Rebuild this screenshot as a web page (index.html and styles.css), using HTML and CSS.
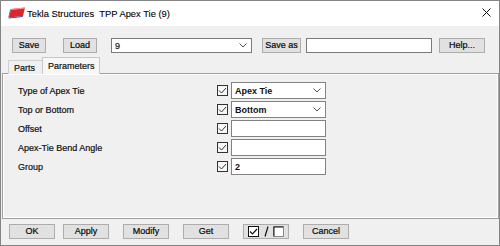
FILE: index.html
```html
<!DOCTYPE html>
<html>
<head>
<meta charset="utf-8">
<link rel="stylesheet" href="styles.css">
</head>
<body>
<div class="window">
  <div class="titlebar">
    <svg class="logo" width="18" height="12" viewBox="0 0 18 12">
      <polygon points="3,2 17,0.5 15,9 1,10.5" fill="#e0242b"/>
      <polygon points="3,2 17,0.5 16.6,1.6 3.2,3.1" fill="#f4a0a0"/>
      <polygon points="1,10.5 15,9 14.6,10 0.6,11.6" fill="#2b4f9e"/>
      <polygon points="1,10.5 3,2 2.2,2.4 0.3,10.6" fill="#2b4f9e"/>
    </svg>
    <span class="title">Tekla Structures&nbsp; TPP Apex Tie (9)</span>
    <svg class="close" width="9" height="9" viewBox="0 0 9 9">
      <path d="M0.5 0.5 L8.5 8.5 M8.5 0.5 L0.5 8.5" stroke="#111" stroke-width="1"/>
    </svg>
  </div>

  <div class="toolbar">
    <div class="btn w34">Save</div>
    <div class="btn w34 load">Load</div>
    <div class="combo top-combo">
      <span>9</span>
      <svg class="chev" width="8" height="5" viewBox="0 0 8 5"><path d="M0.5 0.5 L4 4 L7.5 0.5" fill="none" stroke="#555" stroke-width="1"/></svg>
    </div>
    <div class="btn saveas">Save as</div>
    <div class="field top-field"></div>
    <div class="btn w46 help">Help...</div>
  </div>

  <div class="tabs">
    <div class="tab">Parts</div>
    <div class="tab active">Parameters</div>
  </div>

  <div class="panel">
    <div class="row">
      <span class="label">Type of Apex Tie</span>
      <span class="chk"><svg width="11" height="11" viewBox="0 0 11 11"><rect x="0.5" y="0.5" width="10" height="10" fill="#f7f7f7" stroke="#333"/><path d="M2 5.5 L4.5 8 L9 3" fill="none" stroke="#333" stroke-width="1"/></svg></span>
      <div class="combo val"><span>Apex Tie</span><svg class="chev" width="8" height="5" viewBox="0 0 8 5"><path d="M0.5 0.5 L4 4 L7.5 0.5" fill="none" stroke="#555" stroke-width="1"/></svg></div>
    </div>
    <div class="row">
      <span class="label">Top or Bottom</span>
      <span class="chk"><svg width="11" height="11" viewBox="0 0 11 11"><rect x="0.5" y="0.5" width="10" height="10" fill="#f7f7f7" stroke="#333"/><path d="M2 5.5 L4.5 8 L9 3" fill="none" stroke="#333" stroke-width="1"/></svg></span>
      <div class="combo val"><span>Bottom</span><svg class="chev" width="8" height="5" viewBox="0 0 8 5"><path d="M0.5 0.5 L4 4 L7.5 0.5" fill="none" stroke="#555" stroke-width="1"/></svg></div>
    </div>
    <div class="row">
      <span class="label">Offset</span>
      <span class="chk"><svg width="11" height="11" viewBox="0 0 11 11"><rect x="0.5" y="0.5" width="10" height="10" fill="#f7f7f7" stroke="#333"/><path d="M2 5.5 L4.5 8 L9 3" fill="none" stroke="#333" stroke-width="1"/></svg></span>
      <div class="field val"></div>
    </div>
    <div class="row">
      <span class="label">Apex-Tie Bend Angle</span>
      <span class="chk"><svg width="11" height="11" viewBox="0 0 11 11"><rect x="0.5" y="0.5" width="10" height="10" fill="#f7f7f7" stroke="#333"/><path d="M2 5.5 L4.5 8 L9 3" fill="none" stroke="#333" stroke-width="1"/></svg></span>
      <div class="field val"></div>
    </div>
    <div class="row">
      <span class="label">Group</span>
      <span class="chk"><svg width="11" height="11" viewBox="0 0 11 11"><rect x="0.5" y="0.5" width="10" height="10" fill="#f7f7f7" stroke="#333"/><path d="M2 5.5 L4.5 8 L9 3" fill="none" stroke="#333" stroke-width="1"/></svg></span>
      <div class="field val"><span>2</span></div>
    </div>
  </div>

  <div class="footer">
    <div class="btn w46">OK</div>
    <div class="btn w46 apply">Apply</div>
    <div class="btn w46">Modify</div>
    <div class="btn w46">Get</div>
    <div class="btn w46 toggle">
      <svg width="36" height="11" viewBox="0 0 36 11">
        <rect x="0.5" y="0.5" width="10" height="10" fill="#fff" stroke="#111"/>
        <path d="M2 5.5 L4.5 8 L9 3" fill="none" stroke="#111" stroke-width="1.2"/>
        <path d="M17 10.5 L20 0.5" stroke="#111" stroke-width="1.2"/>
        <rect x="25.5" y="0.5" width="10" height="10" fill="#fff" stroke="#888"/>
        <path d="M26 10 L26 1 L35 1" fill="none" stroke="#111" stroke-width="1"/>
      </svg>
    </div>
    <div class="btn w46">Cancel</div>
  </div>
</div>
</body>
</html>
```

FILE: styles.css
```css
html, body {
  margin: 0;
  padding: 0;
}
body {
  width: 500px;
  height: 246px;
  overflow: hidden;
  background: #f0f0f0;
  font-family: "Liberation Sans", Arial, sans-serif;
  font-size: 9px;
  color: #111;
  -webkit-text-stroke: 0.2px #111;
}
.window {
  box-sizing: border-box;
  width: 500px;
  height: 246px;
  border: 1px solid #858585;
  background: #f0f0f0;
  display: flex;
  flex-direction: column;
}
.titlebar {
  height: 25px;
  background: #fff;
  display: flex;
  align-items: center;
  flex: none;
}
.logo {
  margin-left: 7px;
  margin-right: 1px;
  margin-top: -1px;
}
.title {
  font-size: 9.4px;
  color: #000;
  margin-top: -1px;
  -webkit-text-stroke: 0.1px #000;
}
.close {
  margin-left: auto;
  margin-right: 8px;
  margin-top: -3px;
}
.toolbar {
  display: flex;
  align-items: center;
  padding: 12px 0 0 11px;
  height: 15px;
  flex: none;
}
.btn {
  box-sizing: border-box;
  height: 15px;
  background: #e1e1e1;
  border: 1px solid #adadad;
  display: flex;
  align-items: center;
  justify-content: center;
  color: #000;
  line-height: 1;
  flex: none;
}
.w34 { width: 34px; }
.w46 { width: 46px; }
.load { margin-left: 17px; }
.top-combo {
  margin-left: 14px;
  width: 141px;
}
.saveas {
  margin-left: 10px;
  width: 39px;
}
.top-field {
  margin-left: 5px;
  width: 126px;
}
.help { margin-left: 7px; }
.combo, .field {
  box-sizing: border-box;
  height: 15px;
  background: #fff;
  border: 1px solid #7a7a7a;
  display: flex;
  align-items: center;
  padding-left: 3px;
  flex: none;
}
.combo .chev {
  margin-left: auto;
  margin-right: 4px;
}
.tabs {
  display: flex;
  align-items: flex-end;
  margin-top: 4px;
  padding-left: 7px;
  height: 17px;
  flex: none;
  position: relative;
  z-index: 1;
}
.tab {
  box-sizing: border-box;
  height: 14px;
  border: 1px solid #d0d0d0;
  border-bottom: none;
  padding: 0 5px;
  display: flex;
  align-items: center;
  background: #f0f0f0;
  width: 35px;
}
.tab.active {
  height: 17px;
  width: 58px;
  background: #f7f7f7;
  border-color: #c8c8c8;
  margin-left: -1px;
  padding-bottom: 1px;
}
.panel {
  box-sizing: border-box;
  margin: -1px 0 0 1px;
  width: 497px;
  height: 146px;
  border: 1px solid #a0a0a0;
  box-shadow: inset 1px 1px 0 #fff, inset -1px -1px 0 #fff;
  padding: 8px 0 0 15px;
  display: flex;
  flex-direction: column;
  gap: 2px;
  flex: none;
}
.row {
  display: flex;
  align-items: center;
  height: 17px;
}
.label {
  width: 199px;
  color: #111;
}
.chk {
  width: 14px;
  height: 11px;
  display: flex;
}
.val {
  width: 95px;
  height: 17px;
  border-color: #828282;
  font-weight: bold;
  -webkit-text-stroke: 0;
}
.footer {
  display: flex;
  align-items: center;
  padding: 5px 0 0 8px;
  gap: 14px;
  flex: none;
}
.footer .apply { margin-left: -6px; }
.toggle svg { display: block; }
```
